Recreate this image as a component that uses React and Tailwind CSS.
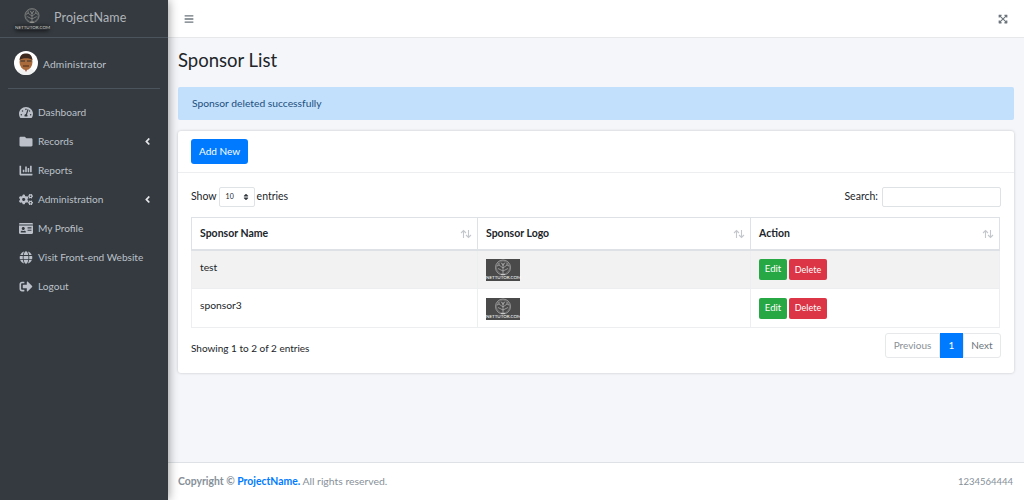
import {
  FaTachometerAlt,
  FaFolder,
  FaChartBar,
  FaCogs,
  FaIdCard,
  FaGlobe,
  FaSignOutAlt,
  FaBars,
  FaExpandArrowsAlt,
  FaAngleLeft,
  FaSort,
} from 'react-icons/fa';

const menu = [
  { label: 'Dashboard', icon: FaTachometerAlt },
  { label: 'Records', icon: FaFolder, arrow: true },
  { label: 'Reports', icon: FaChartBar },
  { label: 'Administration', icon: FaCogs, arrow: true },
  { label: 'My Profile', icon: FaIdCard },
  { label: 'Visit Front-end Website', icon: FaGlobe },
  { label: 'Logout', icon: FaSignOutAlt },
];

const sponsors = [
  { name: 'test', striped: true },
  { name: 'sponsor3', striped: false },
];

function TreeMark({ className, color }) {
  return (
    <svg viewBox="0 0 34 22" className={className} fill="none" stroke={color} strokeWidth="0.6">
      <circle cx="17" cy="8.500" r="7.500" />
      <circle cx="17" cy="8.500" r="6.500" strokeWidth="0.3" />
      <path d="M17 15.500V4M17 9l-4-3M17 9l4-3M17 12l-5-2.500M17 12l5-2.500M17 6.500l-2-3M17 6.500l2-3M13 6l-2 1M21 6l2 1M13 6v-2M21 6v-2" />
      <path d="M15 15.500h4" strokeWidth="1" />
    </svg>
  );
}

function SponsorLogo() {
  return (
    <div className="relative w-[34px] h-[22px] bg-[#4a4a4a]">
      <TreeMark className="w-[34px] h-[22px]" color="#c9c9c9" />
      <span className="absolute bottom-0 left-0 right-0 text-center text-[4.500px] leading-[6px] text-white">
        NETTUTOR.COM
      </span>
    </div>
  );
}

function SideLogo() {
  return (
    <div className="relative w-[32px] h-[28px] shrink-0">
      <TreeMark className="w-[32px] h-[26px]" color="#a9a9a0" />
      <span className="absolute bottom-[3px] left-[-1px] right-[-1px] text-center text-[4.500px] leading-[5px] text-[#c9c9c0] whitespace-nowrap bg-[#2c3035] rounded-full shadow-[0_1px_4px_rgba(0,0,0,0.6)]">
        NETTUTOR.COM
      </span>
    </div>
  );
}

function Avatar() {
  return (
    <svg viewBox="0 0 24 24" className="w-6 h-6 shrink-0 rounded-full bg-white">
      <path d="M2 24c1-5 5-7 10-7s9 2 10 7z" fill="#f1f1f1" />
      <path d="M10 17l2 4 2-4z" fill="#b5482f" />
      <ellipse cx="12" cy="11" rx="6.500" ry="8" fill="#a96b3c" />
      <path d="M5.500 9C6 3.500 9 2.500 12 2.500S18 3.500 18.500 9C16 6.500 8 6.500 5.500 9z" fill="#3c2a20" />
      <path d="M6.500 10h4.500M13 10h4.500" stroke="#2f2f2f" strokeWidth="1.200" />
      <path d="M9 15h6" stroke="#4a2c1a" strokeWidth="1.200" />
    </svg>
  );
}

function SortArrows() {
  return (
    <svg viewBox="0 0 12 10" className="absolute right-[5px] top-[11px] w-[12px] h-[10px]" fill="none" stroke="#c4c8cc" strokeWidth="1.100">
      <path d="M3.500 9V1.500M1 4l2.500-2.500L6 4" />
      <path d="M8.500 1v7.500M6 6l2.500 2.500L11 6" />
    </svg>
  );
}

function Sidebar() {
  return (
    <aside className="w-[168px] shrink-0 bg-[#343a40] text-[#bcc1c9] shadow-[0_0_10px_rgba(0,0,0,0.45)] z-10 flex flex-col">
      <div className="h-[38px] flex items-center pl-[16px] gap-[6px] border-b border-[#4b545c]">
        <SideLogo />
        <span className="text-[12.500px] tracking-[0.1px] text-[#b0b4b9]">ProjectName</span>
      </div>
      <div className="mx-[8px] h-[51px] flex items-center pl-[6px] gap-[5px] border-b border-[#4b545c]">
        <Avatar />
        <span className="text-[10.300px] tracking-[0.1px] mt-[3px]">Administrator</span>
      </div>
      <nav className="flex flex-col pt-[9px]">
        {menu.map(({ label, icon: Icon, arrow }) => (
          <div key={label} className="h-[29px] flex items-center pl-[19px] pr-[16px]">
            <Icon className="w-[14px] h-[13px] shrink-0" />
            <span className="ml-[5px] mt-[1px] text-[10.100px] flex-1 whitespace-nowrap">{label}</span>
            {arrow && <FaAngleLeft className="w-[9px] h-[11px] text-[#e4e6e9]" />}
          </div>
        ))}
      </nav>
    </aside>
  );
}

function TopBar() {
  return (
    <header className="h-[38px] shrink-0 bg-white border-b border-[#e6e8ea] flex items-center justify-between pl-[16px] pr-[16px] text-[#6c757d]">
      <FaBars className="w-[10px] h-[10px]" />
      <FaExpandArrowsAlt className="w-[10px] h-[10px]" />
    </header>
  );
}

function Th({ children, className }) {
  return (
    <th className={`relative h-[32px] text-left font-bold border border-[#dee2e6] border-b-2 pl-[8px] pt-[2px] text-[10.500px] text-[#212529] ${className}`}>
      {children}
      <SortArrows />
    </th>
  );
}

function SponsorTable() {
  return (
    <table className="w-[809px] mt-[10px] border-collapse table-fixed">
      <thead>
        <tr>
          <Th className="w-[286px]">Sponsor Name</Th>
          <Th className="w-[273px]">Sponsor Logo</Th>
          <Th>Action</Th>
        </tr>
      </thead>
      <tbody>
        {sponsors.map((s) => (
          <tr key={s.name} className={s.striped ? 'bg-[#f2f2f2]' : 'bg-white'}>
            <td className="h-[39px] border border-[#eceef0] pl-[8px] pb-[4px] text-[10.300px] text-[#212529] align-middle">{s.name}</td>
            <td className="border border-[#eceef0] pl-[8px] pt-[2px] align-middle">
              <SponsorLogo />
            </td>
            <td className="border border-[#eceef0] pl-[8px] align-middle">
              <div className="flex gap-[2px]">
                <button className="w-[28px] h-[21px] rounded-[2px] bg-[#28a745] text-white text-[9.500px]">Edit</button>
                <button className="w-[38px] h-[21px] rounded-[2px] bg-[#dc3545] text-white text-[9px]">Delete</button>
              </div>
            </td>
          </tr>
        ))}
      </tbody>
    </table>
  );
}

export default function App() {
  return (
    <div className="w-[1024px] h-[500px] overflow-hidden flex bg-[#f4f6f9] font-['Lato',sans-serif]">
      <Sidebar />
      <div className="flex-1 min-w-0 flex flex-col">
        <TopBar />
        <main className="flex-1 min-h-0 pl-[10px] pr-[10px]">
          <h1 className="mt-[9px] text-[18.500px] leading-[26px] text-[#212529]">Sponsor List</h1>
          <div className="mt-[14px] h-[33px] flex items-center pl-[14px] rounded-[2px] bg-[#c2dffb] text-[10.300px] text-[#1c4f80]">
            Sponsor deleted successfully
          </div>
          <section className="mt-[11px] h-[242px] bg-white rounded-[3px] shadow-[0_0_3px_rgba(0,0,0,0.2)]">
            <div className="h-[42px] pl-[13px] flex items-center border-b border-[#eceef0]">
              <button className="w-[57px] h-[25px] rounded-[3px] bg-[#007bff] text-white text-[10px]">Add New</button>
            </div>
            <div className="pl-[13px] pr-[13px] pt-[13px]">
              <div className="h-[21px] flex items-center justify-between text-[10.500px] text-[#212529]">
                <div className="flex items-center gap-[2px]">
                  <span>Show</span>
                  <div className="w-[36px] h-[20px] border border-[#e0e3e6] rounded-[2px] flex items-center justify-between pl-[6px] pr-[5px] text-[7px]">
                    10
                    <FaSort className="w-[6px] h-[8px] text-[#343a40]" />
                  </div>
                  <span>entries</span>
                </div>
                <div className="flex items-center gap-[4px]">
                  <span>Search:</span>
                  <div className="w-[119px] h-[20px] border border-[#dfe2e5] rounded-[2px] bg-white" />
                </div>
              </div>
              <SponsorTable />
              <div className="mt-[5px] flex items-start justify-between">
                <span className="mt-[8px] text-[10px] text-[#212529]">Showing 1 to 2 of 2 entries</span>
                <div className="flex h-[25px] text-[10px] items-stretch">
                  <span className="w-[55px] flex items-center justify-center border border-[#e6e8ea] rounded-l-[3px] text-[#8a9097]">Previous</span>
                  <span className="w-[23px] flex items-center justify-center bg-[#007bff] text-white">1</span>
                  <span className="w-[38px] flex items-center justify-center border border-[#e6e8ea] rounded-r-[3px] text-[#6c757d]">Next</span>
                </div>
              </div>
            </div>
          </section>
        </main>
        <footer className="h-[38px] shrink-0 bg-white border-t border-[#dee2e6] flex items-center justify-between pl-[10px] pr-[11px] pt-[1px] text-[10.400px] text-[#869099]">
          <span>
            <b className="font-bold">Copyright © </b>
            <b className="font-bold text-[#007bff]">ProjectName.</b> All rights reserved.
          </span>
          <span className="text-[9.500px]">1234564444</span>
        </footer>
      </div>
    </div>
  );
}
